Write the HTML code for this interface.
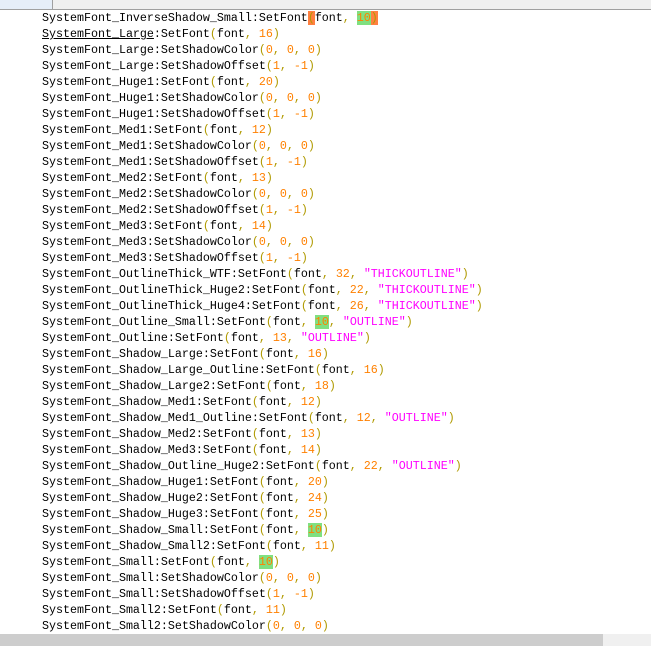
<!DOCTYPE html>
<html><head><meta charset="utf-8"><style>
body{margin:0;width:651px;height:646px;overflow:hidden;background:#fff;position:relative}
.tabs{position:absolute;left:0;top:0;width:651px;height:9px;background:#f0f0f0;border-bottom:1px solid #a0a0a0}
.tab{position:absolute;left:0;top:0;width:52px;height:9px;background:#e6eef8;border-right:1px solid #a0a0a0}
pre{position:absolute;left:42px;top:10px;margin:0;font-family:"Liberation Mono",monospace;font-size:11.67px;line-height:16px;color:#000}
.p{color:#b09a00}.n{color:#ff8000}.s{color:#ff00ff}
.g{background:#80e080}.b{background:#ff8040;color:#b09a00}
.sb{position:absolute;left:0;top:634px;width:603px;height:12px;background:#cdcdcd}
.sb2{position:absolute;left:603px;top:634px;width:48px;height:12px;background:#f0f0f0}
</style></head><body>
<div class="tabs"><div class="tab"></div></div>
<pre>SystemFont_InverseShadow_Small:SetFont<span class="b">(</span>font<span class="p">,</span> <span class="g n">10</span><span class="b">)</span>
<u>SystemFont_Large</u>:SetFont<span class="p">(</span>font<span class="p">,</span> <span class="n">16</span><span class="p">)</span>
SystemFont_Large:SetShadowColor<span class="p">(</span><span class="n">0</span><span class="p">,</span> <span class="n">0</span><span class="p">,</span> <span class="n">0</span><span class="p">)</span>
SystemFont_Large:SetShadowOffset<span class="p">(</span><span class="n">1</span><span class="p">,</span> <span class="n">-1</span><span class="p">)</span>
SystemFont_Huge1:SetFont<span class="p">(</span>font<span class="p">,</span> <span class="n">20</span><span class="p">)</span>
SystemFont_Huge1:SetShadowColor<span class="p">(</span><span class="n">0</span><span class="p">,</span> <span class="n">0</span><span class="p">,</span> <span class="n">0</span><span class="p">)</span>
SystemFont_Huge1:SetShadowOffset<span class="p">(</span><span class="n">1</span><span class="p">,</span> <span class="n">-1</span><span class="p">)</span>
SystemFont_Med1:SetFont<span class="p">(</span>font<span class="p">,</span> <span class="n">12</span><span class="p">)</span>
SystemFont_Med1:SetShadowColor<span class="p">(</span><span class="n">0</span><span class="p">,</span> <span class="n">0</span><span class="p">,</span> <span class="n">0</span><span class="p">)</span>
SystemFont_Med1:SetShadowOffset<span class="p">(</span><span class="n">1</span><span class="p">,</span> <span class="n">-1</span><span class="p">)</span>
SystemFont_Med2:SetFont<span class="p">(</span>font<span class="p">,</span> <span class="n">13</span><span class="p">)</span>
SystemFont_Med2:SetShadowColor<span class="p">(</span><span class="n">0</span><span class="p">,</span> <span class="n">0</span><span class="p">,</span> <span class="n">0</span><span class="p">)</span>
SystemFont_Med2:SetShadowOffset<span class="p">(</span><span class="n">1</span><span class="p">,</span> <span class="n">-1</span><span class="p">)</span>
SystemFont_Med3:SetFont<span class="p">(</span>font<span class="p">,</span> <span class="n">14</span><span class="p">)</span>
SystemFont_Med3:SetShadowColor<span class="p">(</span><span class="n">0</span><span class="p">,</span> <span class="n">0</span><span class="p">,</span> <span class="n">0</span><span class="p">)</span>
SystemFont_Med3:SetShadowOffset<span class="p">(</span><span class="n">1</span><span class="p">,</span> <span class="n">-1</span><span class="p">)</span>
SystemFont_OutlineThick_WTF:SetFont<span class="p">(</span>font<span class="p">,</span> <span class="n">32</span><span class="p">,</span> <span class="s">"THICKOUTLINE"</span><span class="p">)</span>
SystemFont_OutlineThick_Huge2:SetFont<span class="p">(</span>font<span class="p">,</span> <span class="n">22</span><span class="p">,</span> <span class="s">"THICKOUTLINE"</span><span class="p">)</span>
SystemFont_OutlineThick_Huge4:SetFont<span class="p">(</span>font<span class="p">,</span> <span class="n">26</span><span class="p">,</span> <span class="s">"THICKOUTLINE"</span><span class="p">)</span>
SystemFont_Outline_Small:SetFont<span class="p">(</span>font<span class="p">,</span> <span class="g n">10</span><span class="p">,</span> <span class="s">"OUTLINE"</span><span class="p">)</span>
SystemFont_Outline:SetFont<span class="p">(</span>font<span class="p">,</span> <span class="n">13</span><span class="p">,</span> <span class="s">"OUTLINE"</span><span class="p">)</span>
SystemFont_Shadow_Large:SetFont<span class="p">(</span>font<span class="p">,</span> <span class="n">16</span><span class="p">)</span>
SystemFont_Shadow_Large_Outline:SetFont<span class="p">(</span>font<span class="p">,</span> <span class="n">16</span><span class="p">)</span>
SystemFont_Shadow_Large2:SetFont<span class="p">(</span>font<span class="p">,</span> <span class="n">18</span><span class="p">)</span>
SystemFont_Shadow_Med1:SetFont<span class="p">(</span>font<span class="p">,</span> <span class="n">12</span><span class="p">)</span>
SystemFont_Shadow_Med1_Outline:SetFont<span class="p">(</span>font<span class="p">,</span> <span class="n">12</span><span class="p">,</span> <span class="s">"OUTLINE"</span><span class="p">)</span>
SystemFont_Shadow_Med2:SetFont<span class="p">(</span>font<span class="p">,</span> <span class="n">13</span><span class="p">)</span>
SystemFont_Shadow_Med3:SetFont<span class="p">(</span>font<span class="p">,</span> <span class="n">14</span><span class="p">)</span>
SystemFont_Shadow_Outline_Huge2:SetFont<span class="p">(</span>font<span class="p">,</span> <span class="n">22</span><span class="p">,</span> <span class="s">"OUTLINE"</span><span class="p">)</span>
SystemFont_Shadow_Huge1:SetFont<span class="p">(</span>font<span class="p">,</span> <span class="n">20</span><span class="p">)</span>
SystemFont_Shadow_Huge2:SetFont<span class="p">(</span>font<span class="p">,</span> <span class="n">24</span><span class="p">)</span>
SystemFont_Shadow_Huge3:SetFont<span class="p">(</span>font<span class="p">,</span> <span class="n">25</span><span class="p">)</span>
SystemFont_Shadow_Small:SetFont<span class="p">(</span>font<span class="p">,</span> <span class="g n">10</span><span class="p">)</span>
SystemFont_Shadow_Small2:SetFont<span class="p">(</span>font<span class="p">,</span> <span class="n">11</span><span class="p">)</span>
SystemFont_Small:SetFont<span class="p">(</span>font<span class="p">,</span> <span class="g n">10</span><span class="p">)</span>
SystemFont_Small:SetShadowColor<span class="p">(</span><span class="n">0</span><span class="p">,</span> <span class="n">0</span><span class="p">,</span> <span class="n">0</span><span class="p">)</span>
SystemFont_Small:SetShadowOffset<span class="p">(</span><span class="n">1</span><span class="p">,</span> <span class="n">-1</span><span class="p">)</span>
SystemFont_Small2:SetFont<span class="p">(</span>font<span class="p">,</span> <span class="n">11</span><span class="p">)</span>
SystemFont_Small2:SetShadowColor<span class="p">(</span><span class="n">0</span><span class="p">,</span> <span class="n">0</span><span class="p">,</span> <span class="n">0</span><span class="p">)</span></pre>
<div class="sb"></div><div class="sb2"></div>
</body></html>
